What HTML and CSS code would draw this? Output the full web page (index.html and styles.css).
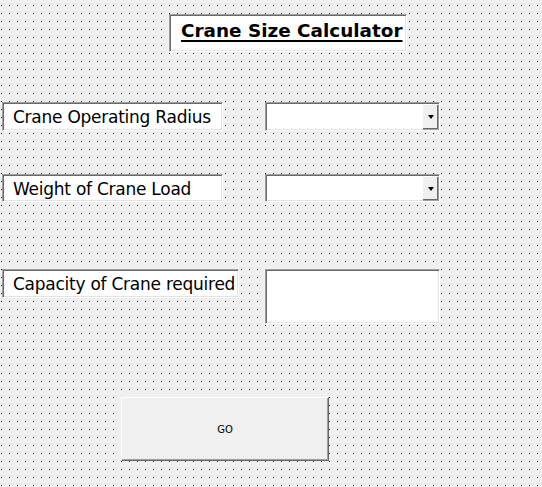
FILE: index.html
```html
<!DOCTYPE html>
<html>
<head>
<meta charset="utf-8">
<link rel="stylesheet" href="styles.css">
</head>
<body>
<div class="form">
  <div class="title-row">
    <div class="title sunken"><span>Crane Size Calculator</span></div>
  </div>
  <div class="row row-1">
    <div class="label sunken">Crane Operating Radius</div>
    <div class="combo sunken"><span class="drop"><span class="arrow"></span></span></div>
  </div>
  <div class="row row-2">
    <div class="label sunken">Weight of Crane Load</div>
    <div class="combo sunken"><span class="drop"><span class="arrow"></span></span></div>
  </div>
  <div class="row row-3">
    <div class="label label-wide sunken">Capacity of Crane required</div>
    <div class="textbox sunken"></div>
  </div>
  <div class="button-row">
    <button class="go">GO</button>
  </div>
</div>
</body>
</html>
```
FILE: styles.css
```css
html, body {
  margin: 0;
  padding: 0;
}
body {
  width: 542px;
  height: 487px;
  overflow: hidden;
  background-color: #000;
  background-image:
    linear-gradient(90deg, transparent 1px, #f0f0f0 1px),
    linear-gradient(180deg, transparent 1px, #f0f0f0 1px);
  background-size: 8px 8px;
  background-position: 1px 5px;
  font-family: "DejaVu Sans", sans-serif;
  color: #000;
}
.form {
  display: flex;
  flex-direction: column;
  align-items: flex-start;
}
.sunken {
  box-sizing: border-box;
  background: #fff;
  border: 1px solid;
  border-color: #a0a0a0 #fff #fff #a0a0a0;
  box-shadow: inset 1px 1px #696969, inset -1px -1px #e3e3e3;
}
.title-row {
  padding: 14px 0 0 169px;
}
.title {
  width: 238px;
  height: 38px;
  padding: 5px 0 0 11px;
  font-size: 18.4px;
  font-weight: bold;
  text-decoration: underline;
  text-decoration-thickness: 2px;
  text-underline-offset: 3px;
  white-space: nowrap;
}
.row {
  display: flex;
  align-items: flex-start;
  padding-left: 2px;
}
.row-1 { margin-top: 50px; }
.row-2 { margin-top: 43px; }
.row-3 { margin-top: 67px; }
.label {
  width: 221px;
  height: 29px;
  padding: 4px 0 0 10px;
  font-size: 17px;
  letter-spacing: -0.25px;
  white-space: nowrap;
  margin-right: 42px;
}
.label-wide {
  width: 237px;
  margin-right: 26px;
}
.combo {
  width: 175px;
  height: 29px;
  display: flex;
  justify-content: flex-end;
  padding: 1px 0 0 0;
}
.row-2 .label, .row-2 .combo { height: 28px; }
.drop {
  width: 17px;
  box-sizing: border-box;
  background: #f0f0f0;
  border: 1px solid;
  border-color: #fff #a0a0a0 #a0a0a0 #fff;
  box-shadow: inset -1px -1px #696969;
  display: flex;
  align-items: center;
  justify-content: center;
}
.arrow {
  width: 0;
  height: 0;
  border-left: 3.5px solid transparent;
  border-right: 3.5px solid transparent;
  border-top: 4px solid #000;
}
.textbox {
  width: 175px;
  height: 55px;
}
.button-row {
  margin-top: 73px;
  padding-left: 121px;
}
.go {
  box-sizing: border-box;
  width: 208px;
  height: 64px;
  background: #f0f0f0;
  border: 1px solid;
  border-color: #fff #696969 #696969 #fff;
  box-shadow: inset -1px -1px #a0a0a0;
  font-family: "DejaVu Sans", sans-serif;
  font-size: 10px;
  color: #000;
  padding: 0;
}
```
